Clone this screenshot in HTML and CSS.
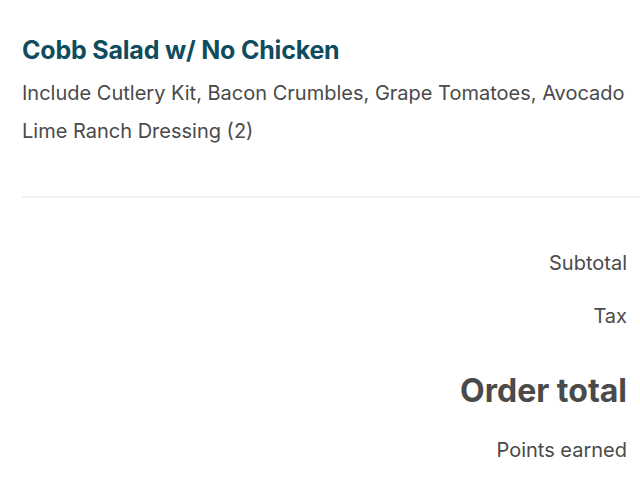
FILE: index.html
```html
<!DOCTYPE html>
<html>
<head>
<meta charset="utf-8">
<link rel="stylesheet" href="styles.css">
</head>
<body>
<div class="page">
  <section class="item">
    <h2 class="item-name">Cobb Salad w/ No Chicken</h2>
    <p class="item-mods">Include Cutlery Kit, Bacon Crumbles, Grape Tomatoes, Avocado Lime Ranch Dressing (2)</p>
  </section>
  <hr class="divider">
  <section class="totals">
    <div class="row subtotal">Subtotal</div>
    <div class="row tax">Tax</div>
    <div class="row order-total">Order total</div>
    <div class="row points">Points earned</div>
  </section>
</div>
</body>
</html>
```
FILE: styles.css
```css
html, body {
  margin: 0;
  padding: 0;
  background: #fff;
}
.page {
  font-family: Inter, "Noto Sans", sans-serif;
  color: #4a4a4a;
  padding: 34px 0 0 22px;
}
.item-name {
  margin: 0;
  font-size: 25px;
  font-weight: 700;
  color: #0f4d5e;
  line-height: 32px;
  letter-spacing: -0.2px;
}
.item-mods {
  margin: 8px 0 0;
  font-size: 20px;
  line-height: 38px;
  width: 612px;
}
.divider {
  border: 0;
  border-top: 2px solid #f2f2f2;
  margin: 46px 0 0;
}
.totals {
  display: flex;
  flex-direction: column;
  align-items: flex-end;
  padding-right: 13px;
  padding-top: 51px;
}
.row {
  font-size: 20px;
  line-height: 28px;
}
.tax {
  margin-top: 25px;
}
.order-total {
  margin-top: 41px;
  font-size: 32px;
  font-weight: 700;
  line-height: 40px;
}
.points {
  margin-top: 25px;
}
```
